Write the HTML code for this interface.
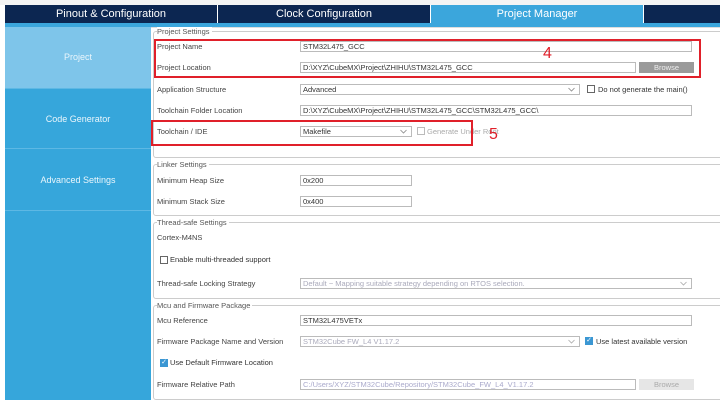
<!DOCTYPE html>
<html><head><meta charset="utf-8"><style>
*{box-sizing:border-box;margin:0;padding:0}
body{width:720px;height:400px;overflow:hidden;background:#fff;font-family:"Liberation Sans",sans-serif;font-size:7.5px;color:#333;position:relative}
.a{position:absolute}
.tab{position:absolute;top:5px;height:18px;background:#0c2651;color:#fff;font-size:11px;text-align:center;line-height:18px}
.side{position:absolute;left:5px;width:146px;color:#eaf6fc;font-size:9px;text-align:center}
.lbl{position:absolute;left:157px;color:#444}
.inp{position:absolute;height:11px;border:1px solid #bbb;background:#fff;padding-left:2px;line-height:9px;color:#333;white-space:nowrap;overflow:hidden}
.grp{position:absolute;left:153px;right:-5px;border:1px solid #ccc;border-radius:3px}
.gt{position:absolute;left:157px;background:#fff;color:#555;padding-right:2px}
.chev{position:absolute;right:4px;top:2px;width:7px;height:5px}
.cb{position:absolute;width:8px;height:8px;border:1px solid #666;background:#fff}
.cbc{position:absolute;width:8px;height:8px;background:#3b97d3;color:#fff;font-size:7px;line-height:8px;text-align:center}
.btn{position:absolute;height:11px;background:#9a9a9a;color:#eee;text-align:center;line-height:11px}
.red{position:absolute;border:2px solid #e0202a}
</style></head><body>
<div class="a" style="left:0;top:0;width:720px;height:5px;background:#f4f4f4"></div>
<div class="tab" style="left:5px;width:212px">Pinout &amp; Configuration</div>
<div class="tab" style="left:218px;width:212px">Clock Configuration</div>
<div class="tab" style="left:431px;width:212px;background:#3ba6dc">Project Manager</div>
<div class="tab" style="left:644px;width:76px"></div>
<div class="a" style="left:5px;top:23px;width:715px;height:4px;background:#3ba6dc"></div>
<div class="a" style="left:151px;top:27px;width:569px;height:1px;background:#ddd"></div>
<div class="a" style="left:5px;top:27px;width:146px;height:373px;background:#36a6db"></div>
<div class="side" style="top:27px;height:61px;background:#7ec5ea;line-height:61px">Project</div>
<div class="side" style="top:88px;height:61px;line-height:60px;border-top:1px solid #5db8e4">Code Generator</div>
<div class="side" style="top:148px;height:63px;line-height:63px;border-top:1px solid #5db8e4;border-bottom:1px solid #5db8e4">Advanced Settings</div>

<div class="grp" style="top:31px;height:127px"></div><div class="gt" style="top:27px">Project Settings</div>
<div class="lbl" style="top:42px">Project Name</div><div class="inp" style="left:300px;top:41px;width:392px">STM32L475_GCC</div>
<div class="lbl" style="top:63px">Project Location</div><div class="inp" style="left:300px;top:62px;width:336px">D:\XYZ\CubeMX\Project\ZHIHU\STM32L475_GCC</div>
<div class="btn" style="left:639px;top:62px;width:55px">Browse</div>
<div class="lbl" style="top:85px">Application Structure</div><div class="inp" style="left:300px;top:84px;width:280px">Advanced<svg class="chev" viewBox="0 0 7 5"><path d="M0.5 1 L3.5 4 L6.5 1" fill="none" stroke="#888" stroke-width="0.8"/></svg></div>
<div class="cb" style="left:587px;top:85px"></div><div class="a" style="left:598px;top:85px">Do not generate the main()</div>
<div class="lbl" style="top:106px">Toolchain Folder Location</div><div class="inp" style="left:300px;top:105px;width:392px">D:\XYZ\CubeMX\Project\ZHIHU\STM32L475_GCC\STM32L475_GCC\</div>
<div class="lbl" style="top:127px">Toolchain / IDE</div><div class="inp" style="left:300px;top:126px;width:112px">Makefile<svg class="chev" viewBox="0 0 7 5"><path d="M0.5 1 L3.5 4 L6.5 1" fill="none" stroke="#888" stroke-width="0.8"/></svg></div>
<div class="cb" style="left:417px;top:127px;border-color:#bbb"></div><div class="a" style="left:427px;top:127px;color:#aaa">Generate Under Root</div>

<div class="grp" style="top:164px;height:52px"></div><div class="gt" style="top:160px">Linker Settings</div>
<div class="lbl" style="top:176px">Minimum Heap Size</div><div class="inp" style="left:300px;top:175px;width:112px">0x200</div>
<div class="lbl" style="top:197px">Minimum Stack Size</div><div class="inp" style="left:300px;top:196px;width:112px">0x400</div>

<div class="grp" style="top:222px;height:77px"></div><div class="gt" style="top:218px">Thread-safe Settings</div>
<div class="lbl" style="top:233px">Cortex-M4NS</div>
<div class="cb" style="left:160px;top:256px"></div><div class="a" style="left:170px;top:255px">Enable multi-threaded support</div>
<div class="lbl" style="top:279px">Thread-safe Locking Strategy</div><div class="inp" style="left:300px;top:278px;width:392px;color:#aab">Default  &#8722;  Mapping suitable strategy depending on RTOS selection.<svg class="chev" viewBox="0 0 7 5"><path d="M0.5 1 L3.5 4 L6.5 1" fill="none" stroke="#aaa" stroke-width="0.8"/></svg></div>

<div class="grp" style="top:305px;height:95px"></div><div class="gt" style="top:301px">Mcu and Firmware Package</div>
<div class="lbl" style="top:316px">Mcu Reference</div><div class="inp" style="left:300px;top:315px;width:392px">STM32L475VETx</div>
<div class="lbl" style="top:337px">Firmware Package Name and Version</div><div class="inp" style="left:300px;top:336px;width:280px;color:#aab">STM32Cube FW_L4 V1.17.2<svg class="chev" viewBox="0 0 7 5"><path d="M0.5 1 L3.5 4 L6.5 1" fill="none" stroke="#aaa" stroke-width="0.8"/></svg></div>
<div class="cbc" style="left:585px;top:337px">&#10003;</div><div class="a" style="left:596px;top:337px">Use latest available version</div>
<div class="cbc" style="left:160px;top:359px">&#10003;</div><div class="a" style="left:170px;top:358px">Use Default Firmware Location</div>
<div class="lbl" style="top:380px">Firmware Relative Path</div><div class="inp" style="left:300px;top:379px;width:336px;color:#aac">C:/Users/XYZ/STM32Cube/Repository/STM32Cube_FW_L4_V1.17.2</div>
<div class="btn" style="left:639px;top:379px;width:55px;background:#e6e6e6;color:#aaa">Browse</div>

<div class="red" style="left:154px;top:39px;width:547px;height:39px"></div>
<div class="red" style="left:151px;top:120px;width:322px;height:26px"></div>
<div class="a" style="left:543px;top:45px;color:#e0202a;font-size:16px">4</div>
<div class="a" style="left:489px;top:126px;color:#e0202a;font-size:16px">5</div>
</body></html>
